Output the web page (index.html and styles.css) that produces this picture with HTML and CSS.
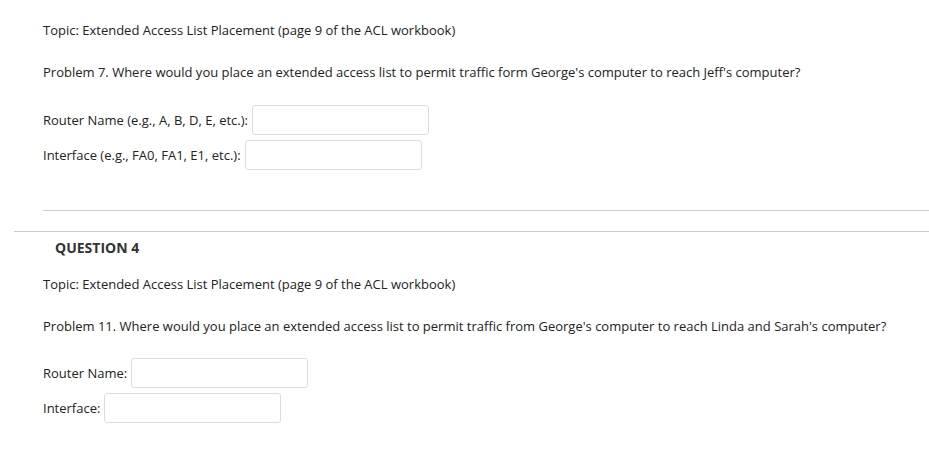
FILE: index.html
```html
<!DOCTYPE html>
<html>
<head>
<meta charset="utf-8">
<link rel="stylesheet" href="styles.css">
</head>
<body>
<div class="page">
  <section class="q q-prev">
    <p class="topic">Topic: Extended Access List Placement (page 9 of the ACL workbook)</p>
    <p class="problem">Problem 7. Where would you place an extended access list to permit traffic form George's computer to reach Jeff's computer?</p>
    <div class="field field-first"><label>Router Name (e.g., A, B, D, E, etc.):</label><input type="text"></div>
    <div class="field"><label>Interface (e.g., FA0, FA1, E1, etc.):</label><input type="text"></div>
    <div class="rule"></div>
  </section>
  <section class="q q-next">
    <h3 class="qtitle">QUESTION 4</h3>
    <div class="body">
      <p class="topic">Topic: Extended Access List Placement (page 9 of the ACL workbook)</p>
      <p class="problem">Problem 11. Where would you place an extended access list to permit traffic from George's computer to reach Linda and Sarah's computer?</p>
      <div class="field field-first"><label>Router Name:</label><input type="text"></div>
      <div class="field"><label>Interface:</label><input type="text"></div>
    </div>
  </section>
</div>
</body>
</html>
```
FILE: styles.css
```css
html, body {
  margin: 0;
  padding: 0;
  background: #fff;
}
body {
  font-family: "Open Sans", "Liberation Sans", sans-serif;
  font-size: 13px;
  color: #222;
}
.page {
  padding-top: 20px;
}
p {
  margin: 0;
  line-height: 20px;
}
.q-prev {
  padding-left: 43px;
}
.problem {
  margin-top: 22px;
}
.field {
  display: flex;
  align-items: center;
  gap: 4px;
  margin-top: 5px;
}
.field-first {
  margin-top: 23px;
}
.q-next .field-first {
  margin-top: 22px;
}
.field input {
  width: 177px;
  height: 30px;
  box-sizing: border-box;
  border: 1px solid #ddd;
  border-radius: 3px;
  background: #fff;
  margin: 0;
  padding: 0 6px;
}
.rule {
  margin-top: 40px;
  border-top: 1px solid #ccc;
}
.q-next {
  margin-left: 14px;
  margin-top: 20px;
  border-top: 1px solid #ccc;
}
.qtitle {
  margin: 0;
  padding: 7px 0 0 41px;
  font-size: 14px;
  font-weight: 700;
  line-height: 18px;
  color: #333;
}
.q-next .body {
  padding-left: 29px;
  padding-top: 17px;
}
```
